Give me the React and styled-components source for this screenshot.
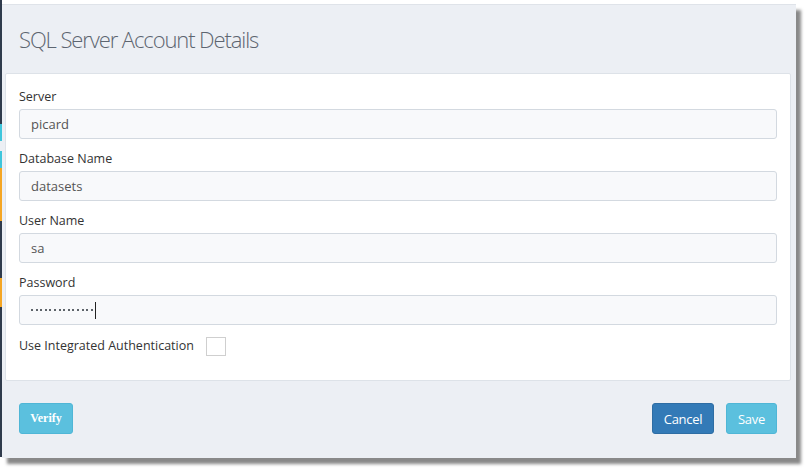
import React from "react";
import styled, { createGlobalStyle } from "styled-components";

const Global = createGlobalStyle`
  html, body { margin: 0; padding: 0; background: #ffffff; }
  body { font-family: "Open Sans", "Liberation Sans", sans-serif; }
  * { box-sizing: border-box; }
`;

const Page = styled.div`
  width: 811px;
  height: 473px;
  display: flex;
  align-items: flex-start;
  overflow: hidden;
`;

const BackdropEdge = styled.div`
  width: 2px;
  height: 457px;
  flex: none;
  display: flex;
  flex-direction: column;
  background: #2f3b4c;
`;

const EdgeSegment = styled.div`
  height: ${(p) => p.h}px;
  background: ${(p) => p.c};
  flex: none;
`;

const Dialog = styled.div`
  margin-top: 4px;
  width: 794px;
  height: 454px;
  flex: none;
  background: #eceff4;
  border-top: 1px solid #dfe3e9;
  box-shadow: 5px 6px 3px rgba(40, 40, 40, 0.55);
  display: flex;
  flex-direction: column;
`;

const Header = styled.div`
  height: 68px;
  padding: 19px 0 0 17px;
`;

const Title = styled.h1`
  margin: 0;
  font-family: "Open Sans", sans-serif;
  font-weight: 300;
  font-size: 22px;
  letter-spacing: -1.1px;
  line-height: 30px;
  color: #5d6570;
`;

const Body = styled.div`
  margin: 0 5px 0 3px;
  background: #ffffff;
  border: 1px solid #dde2e8;
  border-radius: 2px;
  height: 308px;
  padding: 14px 13px 0 13px;
  display: flex;
  flex-direction: column;
`;

const Field = styled.div`
  display: flex;
  flex-direction: column;
  gap: 3px;
  margin-bottom: 11px;
`;

const Label = styled.label`
  font-size: 12.5px;
  line-height: 18px;
  color: #333;
`;

const Input = styled.div`
  height: 30px;
  border: 1px solid #d3d9e0;
  border-radius: 3px;
  background: #f8f9fb;
  padding: 0 11px;
  display: flex;
  align-items: center;
  font-size: 13px;
  color: #555;
`;

const Dots = styled.span`
  display: flex;
  gap: 2.6px;
  align-items: center;
`;

const Dot = styled.span`
  width: 2px;
  height: 2px;
  border-radius: 1px;
  background: #2a3039;
`;

const Caret = styled.span`
  width: 1px;
  height: 17px;
  background: #222;
  margin-left: 2px;
`;

const CheckRow = styled.div`
  display: flex;
  align-items: center;
  gap: 12px;
  height: 20px;
`;

const CheckBox = styled.span`
  width: 20px;
  height: 19px;
  border: 1px solid #cfcfcf;
  background: #fff;
`;

const Footer = styled.div`
  flex: 1;
  display: flex;
  align-items: flex-start;
  padding: 22px 19px 0 17px;
`;

const Spacer = styled.div`
  flex: 1;
`;

const Button = styled.button`
  height: 31px;
  border: 1px solid ${(p) => (p.$primary ? "#2e6da4" : "#4fb6d6")};
  border-radius: 3px;
  background: ${(p) => (p.$primary ? "#337ab7" : "#5bc0de")};
  color: #fff;
  font-family: ${(p) => (p.$serif ? '"Liberation Serif", serif' : '"Open Sans", sans-serif')};
  font-weight: ${(p) => (p.$serif ? 700 : 400)};
  font-size: ${(p) => (p.$serif ? "12px" : "13px")};
  letter-spacing: ${(p) => (p.$serif ? "0" : "-0.3px")};
  padding: 0;
  width: ${(p) => p.w}px;
  margin-left: ${(p) => p.ml || 0}px;
`;

const edge = [
  [124, "#2f3b4c"],
  [17, "#3ec6dc"],
  [10, "#eceff4"],
  [17, "#3ec6dc"],
  [53, "#f5a623"],
  [57, "#2f3b4c"],
  [29, "#f5a623"],
  [150, "#2f3b4c"],
];

export default function App() {
  return (
    <>
      <Global />
      <Page>
        <BackdropEdge>
          {edge.map(([h, c], i) => (
            <EdgeSegment key={i} h={h} c={c} />
          ))}
        </BackdropEdge>
        <Dialog>
          <Header>
            <Title>SQL Server Account Details</Title>
          </Header>
          <Body>
            <Field>
              <Label>Server</Label>
              <Input>picard</Input>
            </Field>
            <Field>
              <Label>Database Name</Label>
              <Input>datasets</Input>
            </Field>
            <Field>
              <Label>User Name</Label>
              <Input>sa</Input>
            </Field>
            <Field>
              <Label>Password</Label>
              <Input>
                <Dots>
                  {Array.from({ length: 14 }).map((_, i) => (
                    <Dot key={i} />
                  ))}
                </Dots>
                <Caret />
              </Input>
            </Field>
            <CheckRow>
              <Label>Use Integrated Authentication</Label>
              <CheckBox />
            </CheckRow>
          </Body>
          <Footer>
            <Button $serif w={54}>Verify</Button>
            <Spacer />
            <Button $primary w={62}>Cancel</Button>
            <Button w={51} ml={12}>Save</Button>
          </Footer>
        </Dialog>
      </Page>
    </>
  );
}
